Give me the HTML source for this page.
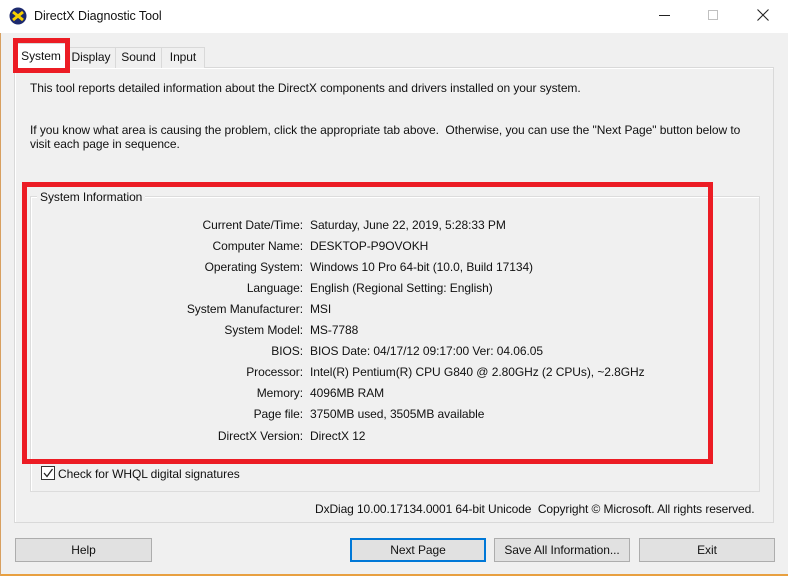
<!DOCTYPE html>
<html><head><meta charset="utf-8"><style>
*{margin:0;padding:0;box-sizing:border-box}
body{width:788px;height:576px;background:#f0f0f0;position:relative;overflow:hidden;font-family:"Liberation Sans",sans-serif;font-size:12px;letter-spacing:-0.06px;color:#111}
.a{position:absolute;white-space:nowrap}
.title{position:absolute;left:0;top:0;width:788px;height:33px;background:#fff}
.panel{position:absolute;left:14px;top:67px;width:760px;height:456px;border:1px solid #d9d9d9;background:#f0f0f0;box-shadow:inset 1px 1px 0 #fff}
.grp{position:absolute;left:30px;top:196px;width:730px;height:296px;border:1px solid #dcdcdc;box-shadow:inset 1px 1px 0 #fff}
.red{position:absolute;border:5px solid #ec1c24}
.btn{position:absolute;top:538px;height:24px;background:#e1e1e1;border:1px solid #adadad;text-align:center;line-height:22px;font-size:12px}
.tab{position:absolute;top:47px;height:21px;border:1px solid #d9d9d9;border-bottom:none;background:#f0f0f0;line-height:19px;text-align:center;font-size:12px}
.lab{position:absolute;left:80px;width:223px;text-align:right}
.val{position:absolute;left:310px}
</style></head><body>
<div class="title"></div>
<svg class="a" style="left:9px;top:7px" width="18" height="18" viewBox="0 0 18 18"><circle cx="9" cy="9" r="8.5" fill="#1d2a6e"/><path d="M4 5 L9 9 L14 5 M4 13 L9 9 L14 13" stroke="#f7d000" stroke-width="3" fill="none"/></svg>
<div class="a" style="left:34px;top:9px;font-size:12.5px">DirectX Diagnostic Tool</div>
<div class="a" style="left:659px;top:15px;width:11px;height:1px;background:#222"></div>
<div class="a" style="left:708px;top:10px;width:10px;height:10px;border:1px solid #c0c0c0"></div>
<svg class="a" style="left:757px;top:9px" width="12" height="12"><path d="M0.5 0.5L11.5 11.5M11.5 0.5L0.5 11.5" stroke="#222" stroke-width="1.1"/></svg>
<div class="panel"></div>
<div class="tab" style="left:66px;width:50px">Display</div>
<div class="tab" style="left:115px;width:47px">Sound</div>
<div class="tab" style="left:161px;width:44px">Input</div>
<div class="tab" style="left:15px;top:43px;height:26px;width:52px;background:#fff;line-height:24px">System</div>
<div class="red" style="left:13px;top:38px;width:57px;height:35px"></div>
<div class="a" style="left:30px;top:81px">This tool reports detailed information about the DirectX components and drivers installed on your system.</div>
<div class="a" style="left:30px;top:123px">If you know what area is causing the problem, click the appropriate tab above.&nbsp; Otherwise, you can use the "Next Page" button below to</div>
<div class="a" style="left:30px;top:137px">visit each page in sequence.</div>
<div class="grp"></div>
<div class="a" style="left:37px;top:190px;background:#f0f0f0;padding:0 3px">System Information</div>
<div class="lab" style="top:218px">Current Date/Time:</div><div class="val" style="top:218px">Saturday, June 22, 2019, 5:28:33 PM</div>
<div class="lab" style="top:239px">Computer Name:</div><div class="val" style="top:239px">DESKTOP-P9OVOKH</div>
<div class="lab" style="top:260px">Operating System:</div><div class="val" style="top:260px">Windows 10 Pro 64-bit (10.0, Build 17134)</div>
<div class="lab" style="top:281px">Language:</div><div class="val" style="top:281px">English (Regional Setting: English)</div>
<div class="lab" style="top:302px">System Manufacturer:</div><div class="val" style="top:302px">MSI</div>
<div class="lab" style="top:323px">System Model:</div><div class="val" style="top:323px">MS-7788</div>
<div class="lab" style="top:344px">BIOS:</div><div class="val" style="top:344px">BIOS Date: 04/17/12 09:17:00 Ver: 04.06.05</div>
<div class="lab" style="top:365px">Processor:</div><div class="val" style="top:365px">Intel(R) Pentium(R) CPU G840 @ 2.80GHz (2 CPUs), ~2.8GHz</div>
<div class="lab" style="top:386px">Memory:</div><div class="val" style="top:386px">4096MB RAM</div>
<div class="lab" style="top:407px">Page file:</div><div class="val" style="top:407px">3750MB used, 3505MB available</div>
<div class="lab" style="top:429px">DirectX Version:</div><div class="val" style="top:429px">DirectX 12</div>
<div class="red" style="left:22px;top:182px;width:691px;height:282px"></div>
<div class="a" style="left:41px;top:466px;width:14px;height:14px;border:1px solid #333;background:#fff"></div>
<svg class="a" style="left:42px;top:467px" width="12" height="12"><path d="M2 6 L5 9.5 L10.5 2" stroke="#222" stroke-width="1.3" fill="none"/></svg>
<div class="a" style="left:58px;top:467px">Check for WHQL digital signatures</div>
<div class="a" style="left:315px;top:502px;letter-spacing:-0.1px">DxDiag 10.00.17134.0001 64-bit Unicode&nbsp; Copyright © Microsoft. All rights reserved.</div>
<div class="btn" style="left:15px;width:137px">Help</div>
<div class="btn" style="left:350px;width:136px;border:2px solid #0078d7;line-height:20px">Next Page</div>
<div class="btn" style="left:494px;width:136px">Save All Information...</div>
<div class="btn" style="left:639px;width:136px">Exit</div>
<div class="a" style="left:0;top:574px;width:788px;height:2px;background:#e8a040"></div>
<div class="a" style="left:0;top:33px;width:1px;height:543px;background:#d8a060"></div>
</body></html>
